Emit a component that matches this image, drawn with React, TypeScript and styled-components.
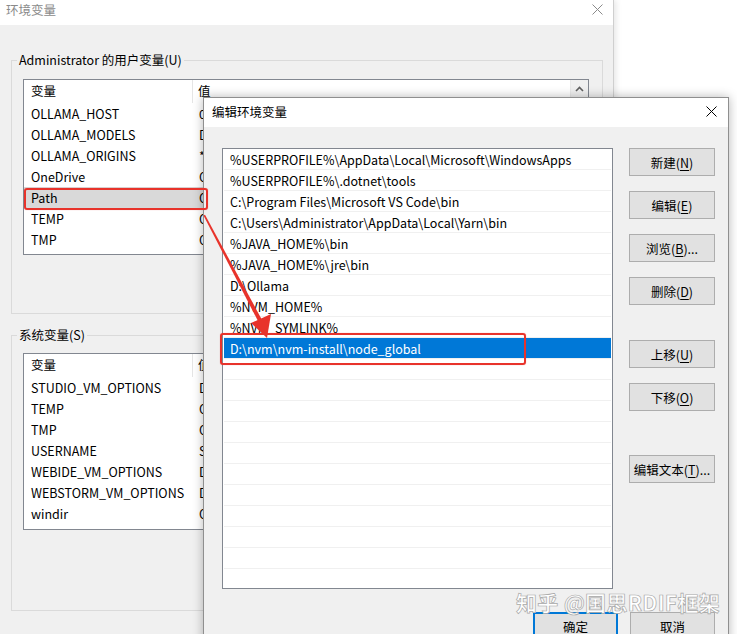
import React from 'react'
import styled, { createGlobalStyle } from 'styled-components'

const GlobalStyle = createGlobalStyle`
  html, body {
    margin: 0;
    padding: 0;
    background: #fff;
  }
  body {
    font-family: "Noto Sans CJK SC", "Noto Sans", sans-serif;
    font-size: 12.5px;
    color: #000;
  }
`

const Desktop = styled.div`
  position: relative;
  width: 737px;
  height: 634px;
  overflow: hidden;
  background: #fff;
`

// windows sit on a free canvas, so they are placed by coordinates
const Window = styled.div`
  position: absolute;
  left: 0;
  top: 0;
  width: 613px;
  height: 634px;
  display: flex;
  flex-direction: column;
  background: #f0f0f0;
  border-right: 1px solid #cfcfcf;
  box-shadow: 2px 0 6px rgba(0, 0, 0, 0.1);
`

const Dialog = styled.div`
  position: absolute;
  left: 203px;
  top: 97px;
  width: 524px;
  height: 560px;
  display: flex;
  flex-direction: column;
  background: #f0f0f0;
  border: 1px solid #8f8f8f;
  box-shadow: 0 0 10px rgba(0, 0, 0, 0.28);
`

const TitleBar = styled.div<{ $h: number; $inactive?: boolean; $pad: string }>`
  flex: none;
  height: ${p => p.$h}px;
  box-sizing: border-box;
  padding: ${p => p.$pad};
  background: #fff;
  display: flex;
  align-items: center;
  justify-content: space-between;
  color: ${p => (p.$inactive ? '#8a8a8a' : '#000')};
`

const CloseIcon = ({ color }: { color: string }) => (
  <svg width="11" height="11" viewBox="0 0 11 11">
    <path d="M0.5 0.5 L10.5 10.5 M10.5 0.5 L0.5 10.5" stroke={color} strokeWidth="1" fill="none" />
  </svg>
)

const WindowBody = styled.div`
  flex: 1;
  padding: 0 10px 0 11px;
`

const Group = styled.fieldset<{ $mt: number; $pb: number }>`
  margin: ${p => p.$mt}px 0 0 0;
  padding: 0 13px ${p => p.$pb}px 11px;
  border: 1px solid #dadada;
  min-width: 0;
`

const GroupLabel = styled.legend`
  margin-left: -6px;
  padding: 0 2px;
  height: 18px;
  line-height: 18px;
  color: #000;
`

const VarList = styled.div<{ $mt: number; $h: number }>`
  margin-top: ${p => p.$mt}px;
  height: ${p => p.$h}px;
  border: 1px solid #828790;
  background: #fff;
  display: flex;
  overflow: hidden;
`

const VarColumns = styled.div`
  flex: 1;
  min-width: 0;
`

const VarHeader = styled.div`
  display: grid;
  grid-template-columns: 169px 1fr;
  height: 23px;
  align-items: center;
`

const HeaderCell = styled.div<{ $divider?: boolean }>`
  height: 100%;
  box-sizing: border-box;
  display: flex;
  align-items: center;
  padding: 0 0 3px ${p => (p.$divider ? 7 : 5)}px;
  border-right: ${p => (p.$divider ? '1px solid #e5e5e5' : 'none')};
`

const VarRow = styled.div<{ $selected?: boolean }>`
  display: grid;
  grid-template-columns: 169px 1fr;
  height: 21px;
  align-items: center;
  background: ${p => (p.$selected ? '#d9d9d9' : 'transparent')};
  white-space: nowrap;
`

const VarCell = styled.div<{ $first?: boolean }>`
  padding-left: ${p => (p.$first ? 7 : 6)}px;
  overflow: hidden;
`

const ScrollBar = styled.div`
  flex: none;
  width: 17px;
  background: #f0f0f0;
  border-left: 1px solid #e8e8e8;
`

const ScrollButton = styled.div`
  height: 17px;
  display: flex;
  align-items: center;
  justify-content: center;
  background: #f0f0f0;
`

const DialogBody = styled.div`
  padding: 21px 13px 0 18px;
  display: grid;
  grid-template-columns: 391px 86px;
  column-gap: 16px;
  row-gap: 24px;
  align-items: start;
`

const PathList = styled.div`
  height: 441px;
  box-sizing: border-box;
  border: 1px solid #828790;
  background: #fff;
  padding: 0 1px;
  overflow: hidden;
`

const PathRow = styled.div<{ $selected?: boolean }>`
  height: 21px;
  box-sizing: border-box;
  border-bottom: 1px solid #f0f0f0;
  padding-left: 6px;
  display: flex;
  align-items: center;
  white-space: nowrap;
  background: ${p => (p.$selected ? '#0078d7' : '#fff')};
  color: ${p => (p.$selected ? '#fff' : '#000')};
`

const ButtonColumn = styled.div`
  display: flex;
  flex-direction: column;
`

const ButtonStack = styled.div<{ $mt?: number }>`
  display: flex;
  flex-direction: column;
  gap: 15px;
  margin-top: ${p => p.$mt || 0}px;
`

const Button = styled.div<{ $focused?: boolean; $w?: number }>`
  box-sizing: border-box;
  height: 28px;
  width: ${p => p.$w || 86}px;
  display: flex;
  align-items: center;
  justify-content: center;
  background: #e1e1e1;
  border: ${p => (p.$focused ? '2px solid #0078d7' : '1px solid #adadad')};
  color: #000;
`

const Key = styled.span`
  text-decoration: underline;
  text-underline-offset: 2px;
`

const FooterRow = styled.div`
  grid-column: 1 / -1;
  display: flex;
  justify-content: flex-end;
  gap: 12px;
  margin-top: -1px;
`

// annotations drawn over the screenshot
const Mark = styled.div<{ $x: number; $y: number; $w: number; $h: number }>`
  position: absolute;
  left: ${p => p.$x}px;
  top: ${p => p.$y}px;
  width: ${p => p.$w}px;
  height: ${p => p.$h}px;
  box-sizing: border-box;
  border: 2px solid #e8332b;
  border-radius: 3px;
  box-shadow: 0 0 1px rgba(232, 51, 43, 0.5);
  pointer-events: none;
`

const Overlay = styled.svg`
  position: absolute;
  left: 0;
  top: 0;
  pointer-events: none;
`

const Watermark = styled.div`
  position: absolute;
  left: 516px;
  top: 587px;
  font-family: "Noto Sans CJK SC", sans-serif;
  font-size: 21px;
  font-weight: 700;
  letter-spacing: 0.3px;
  color: #fff;
  -webkit-text-stroke: 0.7px #a8a8a8;
  white-space: nowrap;
`

const userVars: [string, string, boolean?][] = [
  ['OLLAMA_HOST', '0.0.0.0'],
  ['OLLAMA_MODELS', 'D:\\Ollama\\models'],
  ['OLLAMA_ORIGINS', '*'],
  ['OneDrive', 'C:\\Users\\Administrator\\OneDrive'],
  ['Path', 'C:\\Users\\Administrator\\AppData\\Local\\Microsoft\\WindowsApps', true],
  ['TEMP', 'C:\\Users\\Administrator\\AppData\\Local\\Temp'],
  ['TMP', 'C:\\Users\\Administrator\\AppData\\Local\\Temp'],
]

const systemVars: [string, string][] = [
  ['STUDIO_VM_OPTIONS', 'D:\\Android\\studio64.exe.vmoptions'],
  ['TEMP', 'C:\\Windows\\TEMP'],
  ['TMP', 'C:\\Windows\\TEMP'],
  ['USERNAME', 'SYSTEM'],
  ['WEBIDE_VM_OPTIONS', 'D:\\JetBrains\\webide.vmoptions'],
  ['WEBSTORM_VM_OPTIONS', 'D:\\JetBrains\\webstorm.vmoptions'],
  ['windir', 'C:\\Windows'],
]

const paths = [
  '%USERPROFILE%\\AppData\\Local\\Microsoft\\WindowsApps',
  '%USERPROFILE%\\.dotnet\\tools',
  'C:\\Program Files\\Microsoft VS Code\\bin',
  'C:\\Users\\Administrator\\AppData\\Local\\Yarn\\bin',
  '%JAVA_HOME%\\bin',
  '%JAVA_HOME%\\jre\\bin',
  'D:\\Ollama',
  '%NVM_HOME%',
  '%NVM_SYMLINK%',
  'D:\\nvm\\nvm-install\\node_global',
]

const ROWS = 21

const VariableTable = ({ rows, mt, h }: { rows: [string, string, boolean?][]; mt: number; h: number }) => (
  <VarList $mt={mt} $h={h}>
    <VarColumns>
      <VarHeader>
        <HeaderCell $divider>变量</HeaderCell>
        <HeaderCell>值</HeaderCell>
      </VarHeader>
      {rows.map(([name, value, sel]) => (
        <VarRow key={name} $selected={sel}>
          <VarCell $first>{name}</VarCell>
          <VarCell>{value}</VarCell>
        </VarRow>
      ))}
    </VarColumns>
    <ScrollBar>
      <ScrollButton>
        <svg width="9" height="6" viewBox="0 0 9 6">
          <path d="M1 5 L4.5 1.5 L8 5" stroke="#606060" strokeWidth="1.6" fill="none" />
        </svg>
      </ScrollButton>
    </ScrollBar>
  </VarList>
)

export default function App() {
  return (
    <Desktop>
      <GlobalStyle />
      <Window>
        <TitleBar $h={25} $inactive $pad="0 10px 7px 6px">
          <span>环境变量</span>
          <CloseIcon color="#8a8a8a" />
        </TitleBar>
        <WindowBody>
          <Group $mt={26} $pb={58}>
            <GroupLabel>Administrator 的用户变量(U)</GroupLabel>
            <VariableTable rows={userVars} mt={10} h={174} />
          </Group>
          <Group $mt={12} $pb={80}>
            <GroupLabel>系统变量(S)</GroupLabel>
            <VariableTable rows={systemVars} mt={9} h={175} />
          </Group>
        </WindowBody>
      </Window>

      <Dialog>
        <TitleBar $h={29} $pad="0 11px 3px 8px">
          <span>编辑环境变量</span>
          <CloseIcon color="#000" />
        </TitleBar>
        <DialogBody>
          <PathList>
            {Array.from({ length: ROWS }).map((_, i) => (
              <PathRow key={i} $selected={i === paths.length - 1}>
                {paths[i] || ''}
              </PathRow>
            ))}
          </PathList>
          <ButtonColumn>
            <ButtonStack>
              <Button>新建(<Key>N</Key>)</Button>
              <Button>编辑(<Key>E</Key>)</Button>
              <Button>浏览(<Key>B</Key>)...</Button>
              <Button>删除(<Key>D</Key>)</Button>
            </ButtonStack>
            <ButtonStack $mt={35}>
              <Button>上移(<Key>U</Key>)</Button>
              <Button>下移(<Key>O</Key>)</Button>
            </ButtonStack>
            <ButtonStack $mt={44}>
              <Button>编辑文本(<Key>T</Key>)...</Button>
            </ButtonStack>
          </ButtonColumn>
          <FooterRow>
            <Button $focused $w={85}>确定</Button>
            <Button $w={85}>取消</Button>
          </FooterRow>
        </DialogBody>
      </Dialog>

      <Mark $x={24} $y={188} $w={184} $h={22} />
      <Mark $x={220} $y={333} $w={306} $h={32} />
      <Overlay width="737" height="634" viewBox="0 0 737 634">
        <polygon points="203.5,215.5 205,214.8 261.5,319 258,321" fill="#e8332b" />
        <polygon points="267,338 251,323 271,314" fill="#e8332b" />
      </Overlay>
      <Watermark>知乎 @国思RDIF框架</Watermark>
    </Desktop>
  )
}
